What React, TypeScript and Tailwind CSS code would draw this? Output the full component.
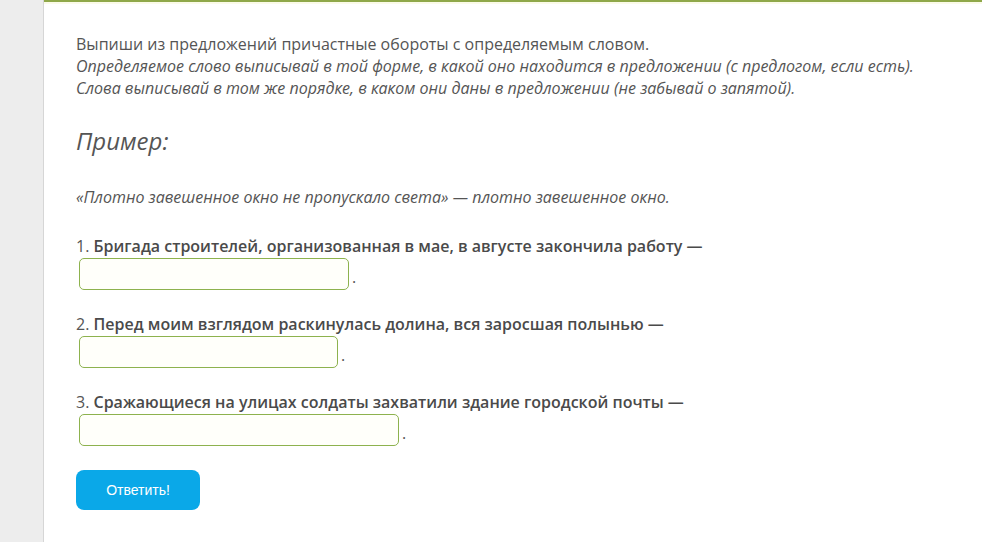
import React from "react";

const items = [
  { n: "1.", text: "Бригада строителей, организованная в мае, в августе закончила работу —", w: "w-[270px]" },
  { n: "2.", text: "Перед моим взглядом раскинулась долина, вся заросшая полынью —", w: "w-[259px]" },
  { n: "3.", text: "Сражающиеся на улицах солдаты захватили здание городской почты —", w: "w-[320px]" },
];

export default function App() {
  return (
    <div className="flex h-[542px] w-[982px] overflow-hidden bg-[#ededed] font-['Open_Sans',sans-serif] text-[16px] leading-[22px] text-[#555]">
      {/* gray side strip */}
      <div className="w-[44px] shrink-0 border-r border-[#d6d6d6] bg-[#ededed]" />

      {/* main card */}
      <div className="flex flex-1 flex-col bg-white">
        <div className="h-[2px] bg-[#8fa84a]" />
        <div className="h-[2px] bg-[#fbfbe9]" />

        <div className="flex flex-col pl-[32px] pt-[29px]">
          <div>Выпиши из предложений причастные обороты с определяемым словом.</div>
          <div className="italic">
            Определяемое слово выписывай в той форме, в какой оно находится в предложении (с предлогом, если есть).
          </div>
          <div className="italic">
            Слова выписывай в том же порядке, в каком они даны в предложении (не забывай о запятой).
          </div>

          <div className="mt-[26px] text-[24px] leading-[32px] italic text-[#555]">Пример:</div>

          <div className="mt-[29px] italic">
            «Плотно завешенное окно не пропускало света» — плотно завешенное окно.
          </div>

          {items.map((it, i) => (
            <div key={it.n} className={i === 0 ? "mt-[27px]" : "mt-[23px]"}>
              <div>
                {it.n} <span className="font-semibold text-[#4a4a4a]">{it.text}</span>
              </div>
              <div className="mt-px flex items-end">
                <input
                  className={`${it.w} ml-[3px] h-[32px] rounded-[5px] border border-[#8db24e] bg-[#fffffa] px-2 outline-none`}
                />
                <span className="ml-[3px] mb-[2px]">.</span>
              </div>
            </div>
          ))}

          <button className="mt-[24px] flex h-[40px] w-[124px] items-center justify-center rounded-[8px] bg-[#0aa8e8] font-['Liberation_Sans',Arial,sans-serif] text-[14px] text-white">
            Ответить!
          </button>
        </div>
      </div>
    </div>
  );
}
